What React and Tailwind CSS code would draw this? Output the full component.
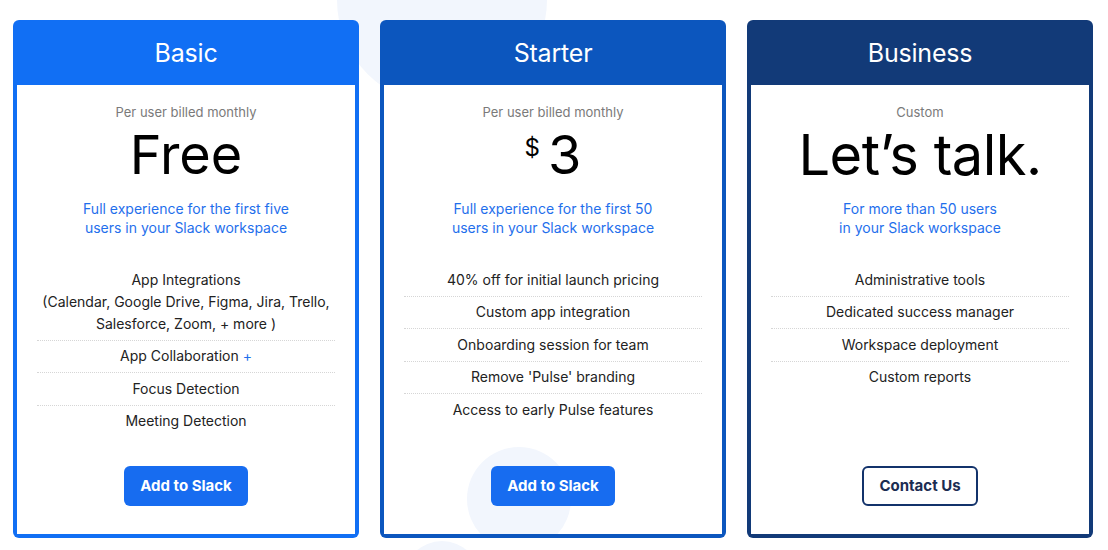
import React from "react";

const font = { fontFamily: "Inter, 'Open Sans', 'Liberation Sans', sans-serif" };

function Feature({ children, last }) {
  return (
    <li
      className={
        "py-[4.75px] text-[14px] leading-[22px] text-[#222] text-center " +
        (last ? "" : "border-b border-dotted border-[#d6d6d6]")
      }
    >
      {children}
    </li>
  );
}

function Card({ title, headerClass, label, price, sub, features, button }) {
  return (
    <div className={"relative z-10 flex h-[518px] w-[346px] flex-col rounded-[6px] px-[4px] pb-[4px] " + headerClass}>
      <div className="flex h-[65px] items-center justify-center pt-[3px] text-[25px] font-normal tracking-[-0.2px] text-white">
        {title}
      </div>
      <div className="relative flex flex-1 flex-col overflow-hidden bg-white px-[20px]">
        <div className="pt-[18px] text-center text-[13px] leading-[18px] text-[#7a7a7a]">{label}</div>
        <div className="mt-[7px] flex h-[54px] justify-center">{price}</div>
        <div className="mt-[17px] text-center text-[14px] leading-[19px] text-[#1f6fec]">{sub}</div>
        <ul className="mt-[27px]">
          {features.map((f, i) => (
            <Feature key={i} last={i === features.length - 1}>
              {f}
            </Feature>
          ))}
        </ul>
        <div className="relative z-10 mt-auto mb-[28px] flex justify-center">{button}</div>
      </div>
    </div>
  );
}

export default function App() {
  const slackBtn = (
    <button className="flex h-[40px] w-[124px] items-center justify-center rounded-[6px] bg-[#176cf0] text-[15px] font-bold text-white">
      Add to Slack
    </button>
  );
  return (
    <div style={font} className="relative h-[550px] w-[1108px] overflow-hidden bg-white">
      {/* decorative circles */}
      <div className="absolute left-[337px] top-[-105px] h-[210px] w-[210px] rounded-full bg-[#f2f6fd]" />
      <div className="absolute left-[404px] top-[541px] h-[76px] w-[76px] rounded-full bg-[#f2f6fd]" />
      <div className="flex gap-[21px] pl-[13px] pt-[20px]">
        <Card
          title="Basic"
          headerClass="bg-[#116ff4]"
          label="Per user billed monthly"
          price={<span className="text-[54px] leading-[54px] text-black">Free</span>}
          sub={
            <>
              Full experience for the first five
              <br />
              users in your Slack workspace
            </>
          }
          features={[
            <>
              App Integrations
              <br />
              (Calendar, Google Drive, Figma, Jira, Trello,
              <br />
              Salesforce, Zoom, + more )
            </>,
            <>
              App Collaboration <span className="text-[#1f6fec]">+</span>
            </>,
            "Focus Detection",
            "Meeting Detection",
          ]}
          button={slackBtn}
        />
        <Card
          title="Starter"
          headerClass="bg-[#0c56be]"
          label="Per user billed monthly"
          price={
            <span className="flex items-start gap-[8px] text-black">
              <span className="mt-[8px] text-[24px] leading-[24px]">$</span>
              <span className="text-[54px] leading-[54px]">3</span>
            </span>
          }
          sub={
            <>
              Full experience for the first 50
              <br />
              users in your Slack workspace
            </>
          }
          features={[
            "40% off for initial launch pricing",
            "Custom app integration",
            "Onboarding session for team",
            "Remove 'Pulse' branding",
            "Access to early Pulse features",
          ]}
          button={
            <div className="relative">
              <div className="absolute left-[-24px] top-[-19px] h-[104px] w-[104px] rounded-full bg-[#f2f6fd]" />
              <div className="relative">{slackBtn}</div>
            </div>
          }
        />
        <Card
          title="Business"
          headerClass="bg-[#123a78]"
          label="Custom"
          price={<span className="text-[56px] leading-[54px] tracking-[-0.5px] text-black">Let’s talk.</span>}
          sub={
            <>
              For more than 50 users
              <br />
              in your Slack workspace
            </>
          }
          features={["Administrative tools", "Dedicated success manager", "Workspace deployment", "Custom reports"]}
          button={
            <button className="flex h-[40px] w-[116px] items-center justify-center rounded-[6px] border-2 border-[#13336b] bg-white text-[15px] font-bold text-[#1b2c52]">
              Contact Us
            </button>
          }
        />
      </div>
    </div>
  );
}
